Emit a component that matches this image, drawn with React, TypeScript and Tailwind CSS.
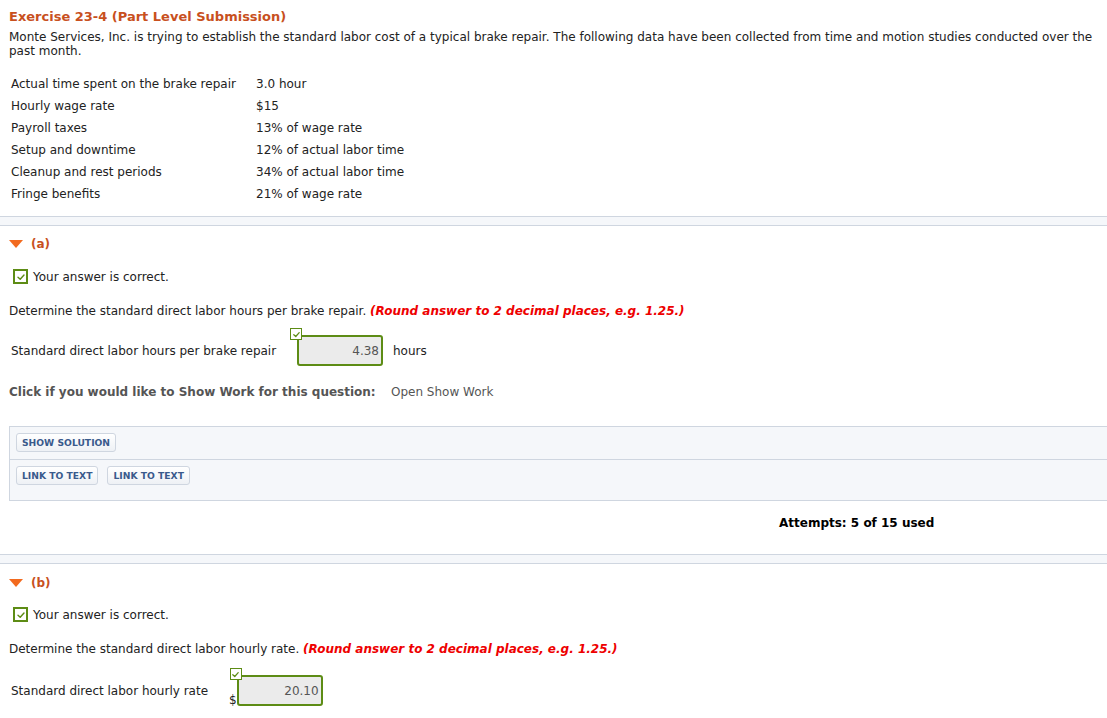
import React from "react";

const FONT = "font-['DejaVu_Sans',Verdana,sans-serif]";

const DATA: [string, string][] = [
  ["Actual time spent on the brake repair", "3.0 hour"],
  ["Hourly wage rate", "$15"],
  ["Payroll taxes", "13% of wage rate"],
  ["Setup and downtime", "12% of actual labor time"],
  ["Cleanup and rest periods", "34% of actual labor time"],
  ["Fringe benefits", "21% of wage rate"],
];

function Tick({ className = "" }: { className?: string }) {
  return (
    <svg viewBox="0 0 10 10" className={className} fill="none">
      <path d="M2 5.2 L4.2 7.2 L8 3" stroke="#5d8c15" strokeWidth="1.4" strokeLinecap="round" strokeLinejoin="round" />
    </svg>
  );
}

function CorrectBox() {
  return (
    <span className="flex h-[15px] w-[15px] items-center justify-center border-2 border-[#5d8c15] bg-white">
      <Tick className="h-[10px] w-[10px]" />
    </span>
  );
}

// 답 입력칸 — 녹색 테두리 + 좌상단 작은 체크 배지
function AnswerBox({ value }: { value: string }) {
  return (
    <span className="relative inline-block">
      <span className="absolute -left-[7px] -top-[7px] flex h-[12px] w-[12px] items-center justify-center border border-[#5d8c15] bg-white">
        <Tick className="h-[9px] w-[9px]" />
      </span>
      <span className="block h-[31px] w-[86px] rounded-[3px] border-2 border-[#5d8c15] bg-[#ebebeb] pr-[2px] pt-[7px] text-right text-[#555]">
        {value}
      </span>
    </span>
  );
}

function Divider() {
  return <div className="h-[10px] border-y border-[#cfd6e0] bg-[#f5f7fa]" />;
}

function PartHeader({ label }: { label: string }) {
  return (
    <div className="flex items-center gap-[8px] pl-[9px] font-bold text-[#c8501e]">
      <svg width="14" height="8" viewBox="0 0 14 8">
        <path d="M0 0 H14 L7 8 Z" fill="#f26a1f" />
      </svg>
      <span>{label}</span>
    </div>
  );
}

function Correct() {
  return (
    <div className="flex items-center gap-[5px] pl-[13px]">
      <CorrectBox />
      <span>Your answer is correct.</span>
    </div>
  );
}

function Button({ children }: { children: React.ReactNode }) {
  return (
    <span className="inline-block h-[19px] rounded-[3px] border border-[#cfd6e0] bg-gradient-to-b from-white to-[#eef1f5] px-[5px] pt-[3px] text-[9.2px] font-bold leading-[12px] text-[#3a5a8c]">
      {children}
    </span>
  );
}

export default function App() {
  return (
    <div className={`${FONT} min-h-[718px] bg-white text-[12px] leading-[14px] text-[#222]`}>
      <div className="px-[9px] pt-[10px]">
        <h1 className="text-[13px] font-bold text-[#c8501e]">Exercise 23-4 (Part Level Submission)</h1>
        <p className="mt-[6px]">
          Monte Services, Inc. is trying to establish the standard labor cost of a typical brake repair. The following data have been collected from time and motion studies conducted over the past month.
        </p>
        <table className="mt-[15px] ml-[2px] border-collapse">
          <tbody>
            {DATA.map(([k, v]) => (
              <tr key={k} className="h-[22px]">
                <td className="w-[245px] p-0">{k}</td>
                <td className="p-0">{v}</td>
              </tr>
            ))}
          </tbody>
        </table>
      </div>

      <div className="mt-[11px]">
        <Divider />
      </div>

      <div className="mt-[11px]">
        <PartHeader label="(a)" />
        <div className="mt-[18px]">
          <Correct />
        </div>
        <p className="mt-[20px] pl-[9px]">
          Determine the standard direct labor hours per brake repair.{" "}
          <span className="font-bold italic text-[#ee0000]">(Round answer to 2 decimal places, e.g. 1.25.)</span>
        </p>
        <div className="mt-[17px] flex items-center pl-[11px]">
          <span className="w-[286px]">Standard direct labor hours per brake repair</span>
          <AnswerBox value="4.38" />
          <span className="ml-[10px]">hours</span>
        </div>
        <div className="mt-[19px] flex pl-[9px] text-[#555]">
          <span className="w-[382px] font-bold">Click if you would like to Show Work for this question:</span>
          <span>Open Show Work</span>
        </div>

        <div className="ml-[9px] mt-[27px] border border-r-0 border-[#cfd6e0] bg-[#f5f7fa]">
          <div className="px-[6px] pb-[7px] pt-[6px]">
            <Button>SHOW SOLUTION</Button>
          </div>
          <div className="flex gap-[9px] border-t border-[#cfd6e0] px-[6px] pb-[15px] pt-[6px]">
            <Button>LINK TO TEXT</Button>
            <Button>LINK TO TEXT</Button>
          </div>
        </div>

        <div className="mt-[15px] pl-[779px] font-bold text-black">Attempts: 5 of 15 used</div>
      </div>

      <div className="mt-[24px]">
        <Divider />
      </div>

      <div className="mt-[12px]">
        <PartHeader label="(b)" />
        <div className="mt-[17px]">
          <Correct />
        </div>
        <p className="mt-[20px] pl-[9px]">
          Determine the standard direct labor hourly rate.{" "}
          <span className="font-bold italic text-[#ee0000]">(Round answer to 2 decimal places, e.g. 1.25.)</span>
        </p>
        <div className="mt-[19px] flex items-center pl-[11px]">
          <span className="w-[218px]">Standard direct labor hourly rate</span>
          <span className="self-end leading-[12px]">$</span>
          <AnswerBox value="20.10" />
        </div>
      </div>
    </div>
  );
}
